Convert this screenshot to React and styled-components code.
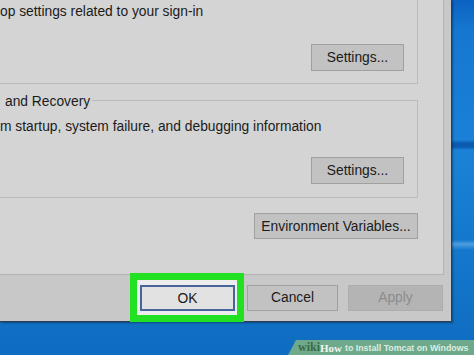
import styled, { createGlobalStyle } from "styled-components";

const GlobalStyle = createGlobalStyle`
  html, body {
    margin: 0;
    padding: 0;
    overflow: hidden;
  }
  body {
    font-family: "Liberation Sans", Arial, sans-serif;
  }
`;

const Screen = styled.div`
  position: relative;
  width: 474px;
  height: 355px;
  overflow: hidden;
  background: linear-gradient(
    to bottom,
    #0b62c2 0px,
    #1577d0 30px,
    #1a80d8 140px,
    #0b5cb0 143px,
    #0b5cb0 147px,
    #1b82d8 150px,
    #1479cc 240px,
    #4c9fe0 244px,
    #1478cc 250px,
    #0f6cc0 355px
  );
`;

const Dialog = styled.div`
  width: 452px;
  box-sizing: border-box;
  display: flex;
  flex-direction: column;
  background: #c8c8c8;
  padding-right: 7px;
  border-right: 1px solid #2e3c4e;
  border-bottom: 1px solid #2e3c4e;
  box-shadow: 1px 1px 2px rgba(0, 0, 0, 0.35);
  color: #1b1b1b;
  font-size: 13.8px;
`;

const Panel = styled.div`
  display: flex;
  flex-direction: column;
  background: #d4d4d4;
  padding: 0 25px 35px 0;
  border-right: 1px solid #b3b3b3;
  border-bottom: 1px solid #b3b3b3;
`;

// top group is cut off by the picture edge, so no top border
const Group = styled.div`
  padding: 2px 13px 12px 0;
  border-right: 1px solid #bbbbbb;
  border-bottom: 1px solid #bbbbbb;
`;

const GroupBox = styled.fieldset`
  margin: 7px 0 0 0;
  min-width: 0;
  padding: 7px 13px 13px 0;
  border: 1px solid #bbbbbb;
  border-left: none;
`;

const Legend = styled.legend`
  padding: 3px 2px 0 5px;
  margin: 0;
  line-height: 16px;
`;

const Desc = styled.div`
  line-height: 20px;
  white-space: nowrap;
`;

const Actions = styled.div`
  display: flex;
  justify-content: flex-end;
  margin-top: ${(p) => p.$top || 0}px;
`;

const Button = styled.button`
  box-sizing: border-box;
  width: ${(p) => p.$w}px;
  height: ${(p) => p.$h || 26}px;
  padding: 0;
  font-family: "Liberation Sans", Arial, sans-serif;
  font-size: 13.8px;
  color: ${(p) => (p.disabled ? "#8c8c8c" : "#1b1b1b")};
  background: ${(p) => (p.disabled ? "#b4b4b4" : "#c2c2c2")};
  border: 1px solid ${(p) => (p.disabled ? "#adadad" : "#a0a0a0")};
`;

const Footer = styled.div`
  display: flex;
  justify-content: flex-end;
  align-items: center;
  gap: 10px;
  padding: 9px 1px 10px 0;
`;

const Highlight = styled.div`
  display: flex;
  padding: 5px 2px 4px 3px;
  margin: -11px -7px -11px -10px;
  border: 7px solid #22e022;
  background: #ededed;
`;

const OkButton = styled(Button)`
  background: #e2e2e2;
  border: 2px solid #46659a;
`;

const Watermark = styled.div`
  position: absolute;
  right: 0;
  bottom: 0;
  width: 186px;
  height: 15px;
  box-sizing: border-box;
  padding-left: 10px;
  display: flex;
  align-items: center;
  white-space: nowrap;
  background: #6ea98b;
  clip-path: polygon(8px 0, 100% 0, 100% 100%, 0 100%);
`;

const Wiki = styled.span`
  font-family: "Liberation Serif", "Times New Roman", serif;
  font-weight: bold;
  font-size: 12px;
  color: #3b6a48;
`;

const How = styled.span`
  font-family: "Liberation Serif", "Times New Roman", serif;
  font-weight: bold;
  font-size: 11px;
  color: #eef6f0;
  margin-right: 3px;
`;

const Title = styled.span`
  font-weight: bold;
  font-size: 8.8px;
  color: #dcede2;
`;

export default function App() {
  return (
    <Screen>
      <GlobalStyle />
      <Dialog>
        <Panel>
          <Group>
            <Desc>op settings related to your sign-in</Desc>
            <Actions $top={22}>
              <Button $w={93} $h={27}>Settings...</Button>
            </Actions>
          </Group>
          <GroupBox>
            <Legend>and Recovery</Legend>
            <Desc>m startup, system failure, and debugging information</Desc>
            <Actions $top={20}>
              <Button $w={93} $h={27}>Settings...</Button>
            </Actions>
          </GroupBox>
          <Actions $top={15}>
            <Button $w={164}>Environment Variables...</Button>
          </Actions>
        </Panel>
        <Footer>
          <Highlight>
            <OkButton $w={95}>OK</OkButton>
          </Highlight>
          <Button $w={91}>Cancel</Button>
          <Button $w={95} disabled>
            Apply
          </Button>
        </Footer>
      </Dialog>
      <Watermark>
        <Wiki>wiki</Wiki>
        <How>How</How>
        <Title>to Install Tomcat on Windows</Title>
      </Watermark>
    </Screen>
  );
}
